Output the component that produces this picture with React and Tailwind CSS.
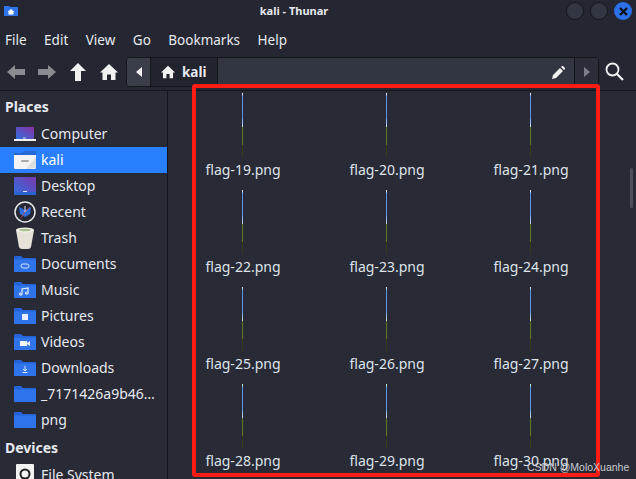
import React from 'react';

const menus = ['File', 'Edit', 'View', 'Go', 'Bookmarks', 'Help'];

const files = [19, 20, 21, 22, 23, 24, 25, 26, 27, 28, 29, 30];

const FolderIcon = ({ glyph }) => (
    <svg width="22" height="16" viewBox="0 0 22 16">
        <path d="M0 1 Q0 0 1 0 H7 L9 2 H21 Q22 2 22 3 V15 Q22 16 21 16 H1 Q0 16 0 15 Z" fill="#2563d8" />
        <path d="M0 3.5 H22 V15 Q22 16 21 16 H1 Q0 16 0 15 Z" fill="#2f74ea" />
        {glyph === 'doc' && <rect x="7" y="8" width="8" height="4" rx="2" fill="none" stroke="#cfe0fb" strokeWidth="1" />}
        {glyph === 'music' && <path d="M8 12 V7 L14 6 V11 M8 12 a1.2 1 0 1 1 -1 -1 M14 11 a1.2 1 0 1 1 -1 -1" fill="none" stroke="#e8f0ff" strokeWidth="1.2" />}
        {glyph === 'pic' && <path d="M8 6 H14 V12 H8 Z" fill="#e8f0ff" />}
        {glyph === 'video' && <path d="M6 7 H13 V9 L16 7 V12 L13 10 V12 H6 Z" fill="#f2f6ff" />}
        {glyph === 'down' && <path d="M11 6 V11 M9 9 L11 11 L13 9 M8.5 12.5 H13.5" fill="none" stroke="#dbe7fd" strokeWidth="1" />}
    </svg>
);

const ComputerIcon = () => (
    <svg width="22" height="16" viewBox="0 0 22 16">
        <defs>
            <linearGradient id="screen" x1="0" y1="1" x2="1" y2="0">
                <stop offset="0" stopColor="#2f6fe0" />
                <stop offset="1" stopColor="#8a2fa0" />
            </linearGradient>
        </defs>
        <rect x="2" y="1" width="18" height="12" fill="url(#screen)" />
        <rect x="0" y="13" width="22" height="2" fill="#f2f2f2" />
        <rect x="9" y="11.5" width="3" height="1" fill="#d0d0e0" />
    </svg>
);

const HomeFolderIcon = () => (
    <svg width="22" height="18" viewBox="0 0 22 18">
        <path d="M0 2 H8 L10 0 H22 V6 H0 Z" fill="#2668d8" />
        <path d="M0 4 H22 V16.5 Q22 18 20.5 18 H1.5 Q0 18 0 16.5 Z" fill="#f4f4f4" />
        <path d="M22 6 V17 L12 18 Z" fill="#dedede" />
        <rect x="7" y="9" width="8" height="2" rx="1" fill="#a8a8a8" />
    </svg>
);

const DesktopIcon = () => (
    <svg width="22" height="18" viewBox="0 0 22 18">
        <defs>
            <linearGradient id="desk" x1="0" y1="1" x2="1" y2="0">
                <stop offset="0" stopColor="#2f6fe0" />
                <stop offset="1" stopColor="#7a38ad" />
            </linearGradient>
        </defs>
        <rect x="0" y="0" width="22" height="18" rx="1" fill="url(#desk)" />
        <rect x="0" y="15" width="22" height="3" fill="#2a62d2" />
        <rect x="9" y="14" width="4" height="1" fill="#e0e6f8" />
    </svg>
);

const RecentIcon = () => (
    <svg width="22" height="22" viewBox="0 0 22 22">
        <circle cx="11" cy="11" r="10" fill="#262935" stroke="#e8e8e8" strokeWidth="1.5" />
        <path d="M5 6 L11 9 L17 6 L16 13 L11 16 L6 13 Z" fill="#2f6fe0" />
        <path d="M11 11 L16 6 M11 11 L7 17" stroke="#e04040" strokeWidth="0.8" />
        <path d="M11 11 L11 5" stroke="#e8e8e8" strokeWidth="1" />
    </svg>
);

const TrashIcon = () => (
    <svg width="20" height="22" viewBox="0 0 20 22">
        <path d="M1 3 L4 20 Q4.5 22 7 22 H13 Q15.5 22 16 20 L19 3 Z" fill="#e6e2d8" />
        <ellipse cx="10" cy="3" rx="9" ry="2.5" fill="#f6f4ee" />
        <ellipse cx="10" cy="3" rx="6" ry="1.3" fill="#a8c090" />
    </svg>
);

const DiskIcon = () => (
    <svg width="18" height="22" viewBox="0 0 18 22">
        <rect x="0" y="0" width="18" height="22" rx="1" fill="#f2f2f2" />
        <circle cx="9" cy="10" r="4.5" fill="none" stroke="#202020" strokeWidth="2" />
    </svg>
);

const places = [
    { name: 'Computer', icon: <ComputerIcon /> },
    { name: 'kali', icon: <HomeFolderIcon />, active: true },
    { name: 'Desktop', icon: <DesktopIcon /> },
    { name: 'Recent', icon: <RecentIcon /> },
    { name: 'Trash', icon: <TrashIcon /> },
    { name: 'Documents', icon: <FolderIcon glyph="doc" /> },
    { name: 'Music', icon: <FolderIcon glyph="music" /> },
    { name: 'Pictures', icon: <FolderIcon glyph="pic" /> },
    { name: 'Videos', icon: <FolderIcon glyph="video" /> },
    { name: 'Downloads', icon: <FolderIcon glyph="down" /> },
    { name: '_7171426a9b46…', icon: <FolderIcon /> },
    { name: 'png', icon: <FolderIcon /> },
];

const SideRow = ({ name, icon, active }) => (
    <div className={`flex items-center h-[26px] pl-[14px] text-[14px] text-[#e6e9ef] ${active ? 'bg-[#2a7fff] text-white' : ''}`}>
        <span className="w-[22px] flex justify-center shrink-0">{icon}</span>
        <span className="ml-[5px] pb-[2px] whitespace-nowrap">{name}</span>
    </div>
);

const Arrow = ({ dir, color }) => (
    <svg width="18" height="16" viewBox="0 0 18 16">
        <path
            d={dir === 'left' ? 'M0 8 L8 1 V5 H18 V11 H8 V15 Z' : 'M18 8 L10 1 V5 H0 V11 H10 V15 Z'}
            fill={color}
        />
    </svg>
);

const HomeGlyph = ({ size }) => (
    <svg width={size} height={size} viewBox="0 0 18 18">
        <path d="M9 1 L18 9.5 H15.5 V17 H11 V11.5 H7 V17 H2.5 V9.5 H0 Z" fill="#f2f2f2" />
    </svg>
);

const FileCell = ({ n }) => (
    <div className="w-[144px] h-[97px] flex flex-col items-center shrink-0">
        <div className="w-px h-[64px] mt-[2px] -translate-x-px flex flex-col">
            <div className="h-[4px] bg-gradient-to-b from-[#f0f4fc] to-[#5c93ea]" />
            <div className="h-[22px] bg-[#5c93ea]" />
            <div className="h-[8px] bg-gradient-to-b from-[#7ea8ec] to-[#c8d8f4]" />
            <div className="h-[18px] bg-[#5f7a1e]" />
            <div className="h-[12px] bg-[#2f3d18]" />
        </div>
        <span className="mt-[3px] text-[14px] leading-[20px] text-[#dfe3ea] whitespace-nowrap">flag-{n}.png</span>
    </div>
);

const App = () => {
    return (
        <div className="relative w-[636px] h-[479px] overflow-hidden bg-[#242731] flex flex-col font-['Noto_Sans','Open_Sans',sans-serif]">
            {/* title bar */}
            <div className="relative h-[23px] flex items-center justify-center pr-[48px] shrink-0">
                <svg className="absolute left-[4px] top-[6px]" width="14" height="10" viewBox="0 0 14 10">
                    <path d="M0 0 H5 L6 1 H14 V10 H0 Z" fill="#2f74ea" />
                    <path d="M7 3 L10.5 6 H9.5 V8.5 H4.5 V6 H3.5 Z" fill="#ffffff" />
                </svg>
                <span className="text-[11px] font-bold text-[#e6e9ef]">kali - Thunar</span>
                <div className="absolute right-[4px] top-[2px] flex gap-[6px]">
                    <span className="w-[18px] h-[18px] rounded-full bg-[#323643] border border-[#14161c]" />
                    <span className="w-[18px] h-[18px] rounded-full bg-[#323643] border border-[#14161c]" />
                    <span className="w-[18px] h-[18px] rounded-full bg-[#2a70e8] flex items-center justify-center">
                        <svg width="9" height="9" viewBox="0 0 9 9">
                            <path d="M1 1 L8 8 M8 1 L1 8" stroke="#0c0e14" strokeWidth="2.2" />
                        </svg>
                    </span>
                </div>
            </div>

            {/* menu bar */}
            <div className="h-[34px] flex items-center gap-[17.5px] pl-[5px] text-[13.5px] text-[#e6e9ef] shrink-0">
                {menus.map((label) => (
                    <span key={label}>{label}</span>
                ))}
            </div>

            {/* toolbar */}
            <div className="h-[34px] flex items-start shrink-0 border-b border-[#14161c]">
                <div className="w-[126px] h-[29px] flex items-center pl-[7px]">
                    <Arrow dir="left" color="#8a8c90" />
                    <span className="ml-[13px]"><Arrow dir="right" color="#8a8c90" /></span>
                    <svg className="ml-[14px]" width="16" height="18" viewBox="0 0 16 18">
                        <path d="M8 0 L16 8 H11 V18 H5 V8 H0 Z" fill="#f2f2f2" />
                    </svg>
                    <span className="ml-[14px]"><HomeGlyph size={18} /></span>
                </div>
                <div className="w-[473px] h-[30px] flex rounded-[4px] border border-[#14161c] bg-[#323643] overflow-hidden">
                    <div className="w-[24px] flex items-center justify-center bg-[#3a3e4b] border-r border-[#14161c]">
                        <svg width="6" height="10" viewBox="0 0 6 10"><path d="M6 0 V10 L0 5 Z" fill="#f2f2f2" /></svg>
                    </div>
                    <div className="w-[67px] flex items-center pl-[10px] bg-[#21232d] border-r border-[#14161c]">
                        <HomeGlyph size={14} />
                        <span className="ml-[7px] text-[13.5px] font-bold text-[#e6e9ef]">kali</span>
                    </div>
                    <div className="flex-1 flex items-center justify-end pr-[9px]">
                        <svg width="13" height="13" viewBox="0 0 13 13">
                            <path d="M0 13 L1 9 L8 2 L11 5 L4 12 Z M9 1 L10 0 Q10.5 -0.2 11 0 L13 2 Q13.2 2.5 13 3 L12 4 Z" fill="#f2f2f2" />
                        </svg>
                    </div>
                    <div className="w-[24px] flex items-center justify-center border-l border-[#14161c] bg-[#2b2e3a]">
                        <svg width="6" height="10" viewBox="0 0 6 10"><path d="M0 0 V10 L6 5 Z" fill="#7d808a" /></svg>
                    </div>
                </div>
                <svg className="ml-[6px] mt-[5px]" width="19" height="19" viewBox="0 0 19 19">
                    <circle cx="7.5" cy="7.5" r="6" fill="none" stroke="#f2f2f2" strokeWidth="1.8" />
                    <path d="M12 12 L18 18" stroke="#f2f2f2" strokeWidth="2.2" />
                </svg>
            </div>

            {/* body */}
            <div className="flex-1 flex min-h-0 bg-[#282a36]">
                <div className="w-[168px] shrink-0 border-r border-[#14161c] overflow-hidden">
                    <div className="h-[30px] flex items-center pl-[5px] text-[14px] font-bold text-[#e6e9ef]">Places</div>
                    {places.map((p) => (
                        <SideRow key={p.name} {...p} />
                    ))}
                    <div className="h-[29px] pb-[1px] flex items-center pl-[5px] text-[14px] font-bold text-[#e6e9ef]">Devices</div>
                    <SideRow name="File System" icon={<DiskIcon />} />
                </div>
                <div className="flex-1 min-w-0 pl-[3px] flex flex-wrap content-start overflow-hidden">
                    {files.map((n) => (
                        <FileCell key={n} n={n} />
                    ))}
                </div>
            </div>

            {/* scrollbar overlay */}
            <div className="absolute left-[630px] top-[168px] w-[3px] h-[40px] rounded-full bg-[#4c4f5c]" />

            {/* red annotation box */}
            <div className="absolute left-[192px] top-[84px] w-[408px] h-[393px] border-[4px] border-[#fb1d14] rounded-[3px]" />

            {/* watermark */}
            <div className="absolute left-[527px] top-[459px] text-[10.5px] leading-[16px] text-[#c8cad0] whitespace-nowrap font-['Liberation_Sans',sans-serif]">CSDN @MoloXuanhe</div>
        </div>
    );
};

export default App;
